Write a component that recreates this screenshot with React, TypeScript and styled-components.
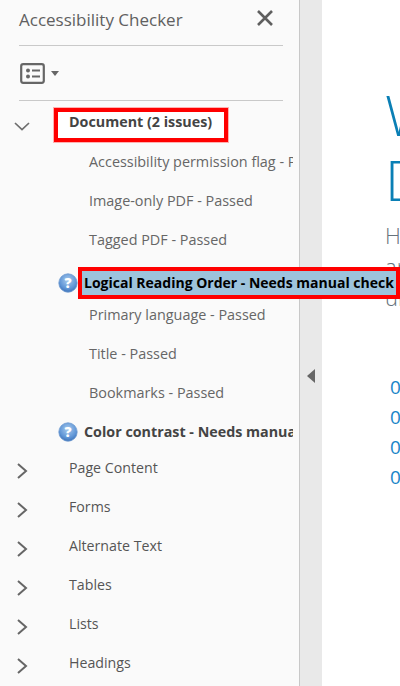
import styled, { createGlobalStyle } from "styled-components";

const GlobalStyle = createGlobalStyle`
  html, body {
    margin: 0;
    height: 100%;
    background: #fff;
    font-family: "Open Sans", "Noto Sans", sans-serif;
  }
  #root {
    height: 100%;
  }
`;

function Chevron({ open }: { open?: boolean }) {
  return (
    <ChevronSvg $open={open} viewBox="0 0 16 16" width="16" height="16">
      <path
        d={open ? "M1 5 L8 11.5 L15 5" : "M4 1 L12 8 L4 15"}
        fill="none"
        stroke={open ? "#6e6e6e" : "#666"}
        strokeWidth={open ? "1.7" : "2"}
      />
    </ChevronSvg>
  );
}

function QuestionIcon() {
  return (
    <QuestionSvg viewBox="0 0 20 20" width="20" height="20">
      <defs>
        <radialGradient id="q" cx="50%" cy="35%" r="65%">
          <stop offset="0%" stopColor="#a9cbee" />
          <stop offset="70%" stopColor="#5f95d6" />
          <stop offset="100%" stopColor="#3d72b8" />
        </radialGradient>
      </defs>
      <circle cx="10" cy="10" r="9.2" fill="url(#q)" stroke="#6f9bd0" strokeWidth="0.8" />
      <text x="10" y="15.2" textAnchor="middle" fontSize="14" fontWeight="800" fill="#fff" fontFamily="Open Sans">
        ?
      </text>
    </QuestionSvg>
  );
}

function App() {
  return (
    <Page>
      <GlobalStyle />
      <Panel>
        <Header>
          <Title>Accessibility Checker</Title>
          <svg viewBox="0 0 18 18" width="18" height="18">
            <path d="M2 2 L16 16 M16 2 L2 16" stroke="#5f5f5f" strokeWidth="2.6" fill="none" />
          </svg>
        </Header>
        <Toolbar>
          <svg viewBox="0 0 25 21" width="25" height="21">
            <rect x="1.2" y="1.2" width="22.6" height="18.6" rx="2" fill="none" stroke="#666" strokeWidth="2.2" />
            <circle cx="8" cy="7.5" r="2" fill="#666" />
            <circle cx="8" cy="13.5" r="2" fill="#666" />
            <path d="M12 7.5 H20 M12 13.5 H20" stroke="#666" strokeWidth="2" />
          </svg>
          <Caret />
        </Toolbar>
        <List>
          <Row>
            <ToggleCell>
              <Chevron open />
            </ToggleCell>
            <DocLabel>Document (2 issues)</DocLabel>
          </Row>
          <ChildRow>Accessibility permission flag - Passed</ChildRow>
          <ChildRow>Image-only PDF - Passed</ChildRow>
          <ChildRow>Tagged PDF - Passed</ChildRow>
          <IssueRow $tall>
            <QuestionIcon />
            <Highlight>Logical Reading Order - Needs manual check</Highlight>
          </IssueRow>
          <ChildRow>Primary language - Passed</ChildRow>
          <ChildRow>Title - Passed</ChildRow>
          <ChildRow>Bookmarks - Passed</ChildRow>
          <IssueRow>
            <QuestionIcon />
            <IssueLabel>Color contrast - Needs manual check</IssueLabel>
          </IssueRow>
          {["Page Content", "Forms", "Alternate Text", "Tables", "Lists", "Headings"].map((name) => (
            <Row key={name}>
              <ToggleCell>
                <Chevron />
              </ToggleCell>
              <RowLabel>{name}</RowLabel>
            </Row>
          ))}
        </List>
      </Panel>
      <Gutter>
        <CollapseArrow />
      </Gutter>
      <Main>
        <Heading>
          Welcome
          <br />
          Document
        </Heading>
        <Intro>
          Here is some
          <br />
          and some more
          <br />
          under the text
        </Intro>
        <Numbers>
          <li>01</li>
          <li>02</li>
          <li>03</li>
          <li>04</li>
        </Numbers>
      </Main>
    </Page>
  );
}

const Page = styled.div`
  display: flex;
  position: relative;
  width: 400px;
  height: 686px;
  overflow: hidden;
`;

const Panel = styled.aside`
  width: 300px;
  flex: none;
  box-sizing: border-box;
  padding-left: 19px;
  background: #fafafa;
  border-right: 1px solid #c8c8c8;
  color: #4b4b4b;
`;

const Header = styled.div`
  display: flex;
  align-items: center;
  justify-content: space-between;
  box-sizing: border-box;
  width: 264px;
  height: 46px;
  padding: 0 9px 9px 0;
  border-bottom: 1px solid #c9c9c9;
`;

const Title = styled.div`
  margin-top: 3px;
  font-size: 17px;
  color: #606060;
`;

const Toolbar = styled.div`
  display: flex;
  align-items: center;
  gap: 6px;
  box-sizing: border-box;
  width: 264px;
  height: 55px;
  padding: 0 0 0 1px;
  border-bottom: 1px solid #c9c9c9;
`;

const Caret = styled.span`
  border-left: 4px solid transparent;
  border-right: 4px solid transparent;
  border-top: 5px solid #666;
`;

const List = styled.div`
  margin-left: -19px;
  padding-top: 2px;
  font-size: 14px;
`;

const Row = styled.div`
  display: flex;
  align-items: center;
  height: 39px;
  white-space: nowrap;
  overflow: visible;
`;

const ToggleCell = styled.div`
  display: flex;
  align-items: center;
  width: 69px;
  flex: none;
  padding-left: 14px;
  box-sizing: border-box;
`;

const ChevronSvg = styled.svg<{ $open?: boolean }>`
  display: block;
  margin-top: ${(p) => (p.$open ? "7px" : "6px")};
`;

const RowLabel = styled.span`
  font-size: 14.2px;
  color: #555;
`;

const DocLabel = styled.span`
  margin: 4px 0 0 -15px;
  padding: 0 0 6px 11px;
  height: 34px;
  line-height: 20px;
  box-sizing: border-box;
  border: 4px solid #ff0000;
  outline: 1px solid #ffb0b0;
  background: #fff;
  font-size: 14.3px;
  font-weight: 700;
  color: #444;
  width: 174px;
  flex: none;
`;

const ChildRow = styled.div`
  height: 39px;
  line-height: 39px;
  width: 293px;
  padding-left: 89px;
  box-sizing: border-box;
  font-size: 14.4px;
  white-space: nowrap;
  overflow: hidden;
  color: #666;
`;

const IssueRow = styled.div<{ $tall?: boolean }>`
  display: flex;
  align-items: center;
  gap: 6px;
  width: 293px;
  height: 36px;
  box-sizing: border-box;
  padding: ${(p) => (p.$tall ? "11px" : "3px")} 0 0 58px;
  white-space: nowrap;
`;

const QuestionSvg = styled.svg`
  flex: none;
`;

const IssueLabel = styled.span`
  overflow: hidden;
  font-size: 14.3px;
  font-weight: 700;
  color: #444;
`;

const Highlight = styled.span`
  position: absolute;
  left: 78px;
  top: 267px;
  z-index: 2;
  width: 322px;
  height: 32px;
  box-sizing: border-box;
  padding-left: 2px;
  line-height: 24px;
  border: 4px solid #ff0000;
  background: #9dc3dc;
  font-weight: 700;
  color: #000;
  overflow: hidden;
`;

const Gutter = styled.div`
  display: flex;
  width: 22px;
  flex: none;
  background: #e9e9e9;
  justify-content: flex-start;
  padding-top: 369px;
  box-sizing: border-box;
`;

const CollapseArrow = styled.span`
  margin-left: 7px;
  height: 0;
  border-top: 7px solid transparent;
  border-bottom: 7px solid transparent;
  border-right: 8px solid #666;
`;

const Main = styled.main`
  flex: 1;
  min-width: 0;
  padding: 82px 0 0 63px;
  overflow: hidden;
  white-space: nowrap;
  background: #fff;
`;

const Heading = styled.h1`
  margin: 0;
  font-size: 56px;
  line-height: 65px;
  font-weight: 300;
  color: #0a7fb5;
`;

const Intro = styled.p`
  margin: 8px 0 0;
  font-size: 22px;
  line-height: 31px;
  font-weight: 300;
  color: #66727c;
`;

const Numbers = styled.ul`
  margin: 59px 0 0;
  padding: 0 0 0 5px;
  list-style: none;
  font-size: 19px;
  line-height: 30px;
  color: #1a85c8;
`;

export default App;
